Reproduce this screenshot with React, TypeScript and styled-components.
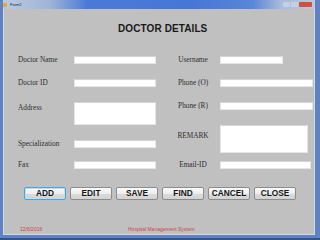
import React from 'react';
import styled, { createGlobalStyle } from 'styled-components';

const GlobalStyle = createGlobalStyle`
  html, body {
    margin: 0;
    padding: 0;
    background: #34558a;
  }
`;

const Screen = styled.main`
  width: 320px;
  height: 240px;
  overflow: hidden;
  background-color: #34558a;
`;

const Window = styled.section`
  box-sizing: border-box;
  width: 320px;
  height: 238px;
  display: flex;
  flex-direction: column;
  background-color: #5f82c2;
  border-left: 3px solid #5f82c2;
  border-right: 5px solid #5f82c2;
  border-bottom: 3px solid #5f82c2;
`;

const TitleBar = styled.header`
  box-sizing: border-box;
  height: 9px;
  flex: none;
  display: flex;
  align-items: center;
  padding: 0 3px 0 0;
  background-color: #4676d6;
  background-image: linear-gradient(90deg, #bccae0 0%, #9fb4d8 15%, #4c7ad8 27%, #4676d6 60%, #5a86d8 80%, #a6badc 89%, #bcc9de 100%);
`;

const AppIcon = styled.span`
  width: 4px;
  height: 4px;
  margin-right: 3px;
  background: #e8a832;
  border-radius: 1px;
`;

const TitleText = styled.span`
  font-family: 'Liberation Sans', Arial, sans-serif;
  font-size: 4px;
  color: #1c2a44;
`;

const Controls = styled.div`
  margin-left: auto;
  display: flex;
  gap: 1px;
`;

const Ctl = styled.span<{ $w: number; $close?: boolean }>`
  width: ${(p) => p.$w}px;
  height: 5px;
  border-radius: 1px;
  background: ${(p) => (p.$close ? '#d2503d' : '#c6d0de')};
`;

const Client = styled.div`
  box-sizing: border-box;
  flex: 1;
  display: flex;
  flex-direction: column;
  background: #c0c0c0;
  padding: 14px 0 0 14px;
  border-left: 1px solid #d3d9e3;
  border-right: 1px solid #d3d9e3;
  border-bottom: 1px solid #d3d9e3;
`;

const Heading = styled.h1`
  margin: 0 0 0 100px;
  font-family: 'Liberation Sans', Arial, sans-serif;
  font-weight: bold;
  font-size: 10px;
  line-height: 12px;
  color: #1a1a1a;
  letter-spacing: 0.1px;
`;

const FormArea = styled.div`
  display: flex;
  margin-top: 20px;
  gap: 20px;
`;

const Panel = styled.div<{ $cols: string; $rows: string }>`
  display: grid;
  grid-template-columns: ${(p) => p.$cols};
  grid-template-rows: ${(p) => p.$rows};
  align-items: start;
`;

const Label = styled.span<{ $top: number; $center?: boolean }>`
  font-family: 'Liberation Serif', 'Times New Roman', serif;
  font-size: 7.3px;
  line-height: 9px;
  color: #2e2e2e;
  padding-top: ${(p) => p.$top}px;
  text-align: ${(p) => (p.$center ? 'center' : 'left')};
  padding-right: ${(p) => (p.$center ? '10px' : '0')};
  white-space: nowrap;
`;

const Input = styled.div<{ $w?: number; $h?: number }>`
  box-sizing: border-box;
  width: ${(p) => (p.$w ? `${p.$w}px` : '100%')};
  height: ${(p) => p.$h ?? 8}px;
  margin-top: 1px;
  background: #ffffff;
  border: 1px solid #e6e6e6;
  border-top-color: #d4d4d4;
`;

const ButtonRow = styled.div`
  display: flex;
  gap: 4px;
  margin: 18px 0 0 6px;
`;

const Button = styled.button<{ $focus?: boolean }>`
  box-sizing: border-box;
  width: 42px;
  height: 13px;
  padding: 0;
  font-family: 'Liberation Sans', Arial, sans-serif;
  font-weight: bold;
  font-size: 8.3px;
  line-height: 11px;
  color: #151515;
  background: linear-gradient(#fbfbfb 0%, #ededed 50%, #dcdcdc 51%, #d2d2d2 100%);
  border: 1px solid ${(p) => (p.$focus ? '#4fa3d9' : '#8c8c8c')};
  border-radius: 2px;
  box-shadow: ${(p) => (p.$focus ? 'inset 0 0 0 1px #b7e0f5' : 'none')};
`;

const Footer = styled.div`
  display: flex;
  margin: 26px 0 0 2px;
  font-family: 'Liberation Sans', Arial, sans-serif;
  font-size: 5px;
  line-height: 6px;
  color: #d2403f;
`;

const FooterDate = styled.span`
  width: 108px;
`;

type Field = { label: string; top: number; w?: number; h?: number };

const leftFields: Field[] = [
  { label: 'Doctor Name', top: 0 },
  { label: 'Doctor ID', top: 0 },
  { label: 'Address', top: 2, h: 23 },
  { label: 'Specialization', top: 0 },
  { label: 'Fax', top: 0 },
];

const rightFields: Field[] = [
  { label: 'Username', top: 0, w: 63 },
  { label: 'Phone (O)', top: 0 },
  { label: 'Phone (R)', top: 0 },
  { label: 'REMARK', top: 7, w: 88, h: 28 },
  { label: 'Email-ID', top: 0, w: 91 },
];

const buttons = ['ADD', 'EDIT', 'SAVE', 'FIND', 'CANCEL', 'CLOSE'];

export default function App() {
  return (
    <Screen>
      <GlobalStyle />
      <Window>
        <TitleBar>
          <AppIcon />
          <TitleText>Form2</TitleText>
          <Controls>
            <Ctl $w={7} />
            <Ctl $w={7} />
            <Ctl $w={13} $close />
          </Controls>
        </TitleBar>
        <Client>
          <Heading>DOCTOR DETAILS</Heading>
          <FormArea>
            <Panel $cols="56px 82px" $rows="23px 23px 38px 21px 9px">
              {leftFields.map((f) => (
                <React.Fragment key={f.label}>
                  <Label $top={f.top}>{f.label}</Label>
                  <Input $w={f.w} $h={f.h} />
                </React.Fragment>
              ))}
            </Panel>
            <Panel $cols="44px 93px" $rows="23px 23px 23px 36px 9px">
              {rightFields.map((f) => (
                <React.Fragment key={f.label}>
                  <Label $top={f.top} $center>
                    {f.label}
                  </Label>
                  <Input $w={f.w} $h={f.h} />
                </React.Fragment>
              ))}
            </Panel>
          </FormArea>
          <ButtonRow>
            {buttons.map((b, i) => (
              <Button key={b} $focus={i === 0}>
                {b}
              </Button>
            ))}
          </ButtonRow>
          <Footer>
            <FooterDate>12/6/2016</FooterDate>
            <span>Hospital Management System</span>
          </Footer>
        </Client>
      </Window>
    </Screen>
  );
}
